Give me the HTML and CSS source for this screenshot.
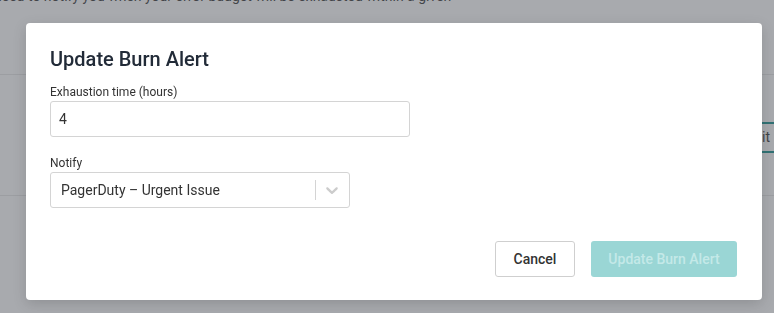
FILE: index.html
```html
<!DOCTYPE html>
<html lang="en">
<head>
    <meta charset="UTF-8">
    <meta name="viewport" content="width=device-width, initial-scale=1.0">
    <title>Update Burn Alert</title>
    <link rel="stylesheet" href="styles.css">
</head>
<body>
    <div class="page">
        <p class="intro">need to notify you when your error budget will be exhausted within a given</p>
        <div class="alert-row">
            <button class="edit-btn">Edit</button>
        </div>
    </div>

    <div class="overlay">
        <div class="modal">
            <h2>Update Burn Alert</h2>
            <div class="form-group">
                <label for="hours">Exhaustion time (hours)</label>
                <input type="text" id="hours" class="text-input" value="4">
            </div>
            <div class="form-group">
                <label>Notify</label>
                <div class="select">
                    <span class="select-value">PagerDuty – Urgent Issue</span>
                    <span class="select-sep"></span>
                    <span class="select-arrow">
                        <svg width="20" height="20" viewBox="0 0 20 20"><path d="M4.516 7.548c0.436-0.446 1.043-0.481 1.576 0l3.908 3.747 3.908-3.747c0.533-0.481 1.141-0.446 1.574 0 0.436 0.445 0.408 1.197 0 1.615-0.406 0.418-4.695 4.502-4.695 4.502-0.217 0.223-0.502 0.335-0.787 0.335s-0.57-0.112-0.789-0.335c0 0-4.287-4.084-4.695-4.502s-0.436-1.170 0-1.615z"/></svg>
                    </span>
                </div>
            </div>
            <div class="modal-footer">
                <button class="btn btn-cancel">Cancel</button>
                <button class="btn btn-primary" disabled>Update Burn Alert</button>
            </div>
        </div>
    </div>
</body>
</html>
```

FILE: styles.css
```css
html, body {
    margin: 0;
    padding: 0;
    height: 100%;
    overflow: hidden;
}
body {
    font-family: Roboto, 'Liberation Sans', sans-serif;
    background-color: #fff;
    color: #333;
}
.page {
    margin-top: -14px;
}
.intro {
    margin: 0 0 0 -6px;
    font-size: 14px;
    line-height: 20px;
    color: #333;
    white-space: nowrap;
}
.alert-row {
    margin-top: 68px;
    height: 122px;
    border-top: 1px solid #e6e6e6;
    border-bottom: 1px solid #e6e6e6;
    display: flex;
    align-items: center;
    justify-content: flex-end;
    padding-top: 4px;
    box-sizing: border-box;
}
.edit-btn {
    margin-right: -22px;
    height: 31px;
    padding: 0 24px 0 16px;
    background: #fff;
    border: 2px solid #128f8c;
    border-radius: 3px;
    font-family: inherit;
    font-size: 14px;
    color: #333;
}
.overlay {
    position: fixed;
    top: 0;
    left: 0;
    right: 0;
    bottom: 0;
    background-color: rgba(82, 86, 94, 0.5);
    padding: 23px 0 0 26px;
    box-sizing: border-box;
}
.modal {
    width: 736px;
    height: 277px;
    box-sizing: border-box;
    background-color: #fff;
    border-radius: 4px;
    padding: 24px 25px 23px 24px;
    box-shadow: 0 4px 14px rgba(0, 0, 0, 0.15);
}
.modal h2 {
    margin: 0 0 13px;
    font-size: 20px;
    line-height: 24px;
    font-weight: 500;
    color: #222b38;
}
.form-group {
    margin-bottom: 18px;
}
.form-group label {
    display: block;
    font-size: 12px;
    line-height: 16px;
    margin-bottom: 1px;
    color: #333;
}
.text-input {
    display: block;
    width: 360px;
    height: 36px;
    box-sizing: border-box;
    padding: 0 8px;
    border: 1px solid #d4d4d4;
    border-radius: 3px;
    font-family: inherit;
    font-size: 14px;
    color: #333;
}
.select {
    width: 300px;
    height: 36px;
    box-sizing: border-box;
    border: 1px solid #d4d4d4;
    border-radius: 3px;
    display: flex;
    align-items: center;
}
.select-value {
    flex: 1;
    padding-left: 10px;
    font-size: 14px;
    color: #333;
}
.select-sep {
    width: 1px;
    height: 20px;
    background-color: #d4d4d4;
}
.select-arrow {
    display: flex;
    padding: 0 7px 0 6px;
    fill: #cccccc;
}
.modal-footer {
    margin-top: 33px;
    display: flex;
    justify-content: flex-end;
    gap: 16px;
}
.btn {
    height: 36px;
    border-radius: 3px;
    font-family: inherit;
    font-size: 14px;
    font-weight: 500;
    padding: 0 16px;
}
.btn-cancel {
    width: 80px;
    background-color: #fff;
    border: 1px solid #cfcfcf;
    color: #333;
}
.btn-primary {
    width: 146px;
    background-color: #9ad6d5;
    border: none;
    color: #c4e9e8;
}
```
